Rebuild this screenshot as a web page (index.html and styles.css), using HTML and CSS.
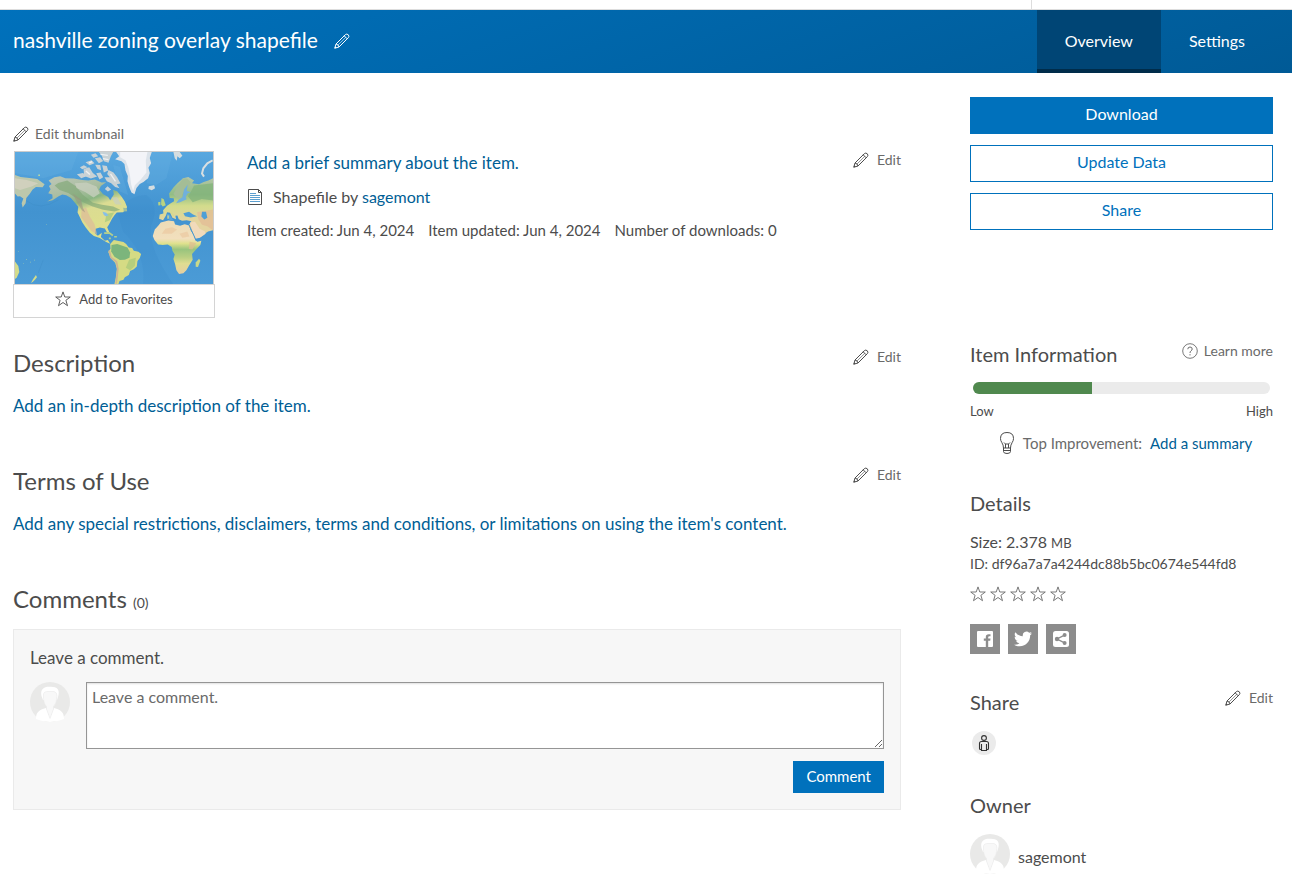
FILE: index.html
```html
<!DOCTYPE html>
<html lang="en">
<head>
    <meta charset="UTF-8">
    <meta name="viewport" content="width=device-width, initial-scale=1.0">
    <title>nashville zoning overlay shapefile</title>
    <link rel="stylesheet" href="styles.css">
</head>
<body>
    <!-- shared icons -->
    <svg class="sprite" aria-hidden="true">
        <symbol id="pencil" viewBox="0 0 16 16">
            <path d="M.8 15.200 2 11 11.300 1.700Q12.800.4 14.300 1.800 15.600 3.300 14.300 4.700L5 14Z M2 11Q4.500 11.500 5 14 M10.200 2.800 13.200 5.800" fill="none" stroke="currentColor" stroke-linejoin="round"/>
            <path d="M4 12 11.800 4.300" fill="none" stroke="currentColor" stroke-width=".6"/>
            <path d="M.4 15.600 1.200 13.300 2.700 14.800Z" fill="currentColor"/>
        </symbol>
        <symbol id="star" viewBox="0 0 16 16">
            <path d="M8 .9 9.800 6H15.300L10.900 9.300 12.500 14.700 8 11.500 3.500 14.700 5.100 9.300.7 6H6.200Z" fill="none" stroke="currentColor" stroke-width=".9"/>
        </symbol>
        <symbol id="avatar" viewBox="0 0 40 40">
            <circle cx="20" cy="20" r="20" fill="#e9e9e8"/>
            <path d="M11.500 14C10 7 14 4.500 20 4.800 27 4.500 30 7.500 28.300 14L27 18H13Z" fill="#fff"/>
            <path d="M6 37C6 30 9 28 16 26L20 36 24 26C31 28 34 30 34 37Q27 40 20 40T6 37Z" fill="#fff"/>
            <path d="M13.500 12Q14 9.500 17 9.500H24Q27 10 27 14 27 21 23.500 24.500V27L20 36.500 16.500 27V24.500Q13 21 13.500 12Z" fill="#f8f8f8" stroke="#ebebeb" stroke-width=".6"/>
        </symbol>
    </svg>

    <div class="topbar"><div class="topbar-user"></div></div>

    <header class="header">
        <div class="title">
            <h1>nashville zoning overlay shapefile</h1>
            <button class="title-edit" aria-label="Edit title"><svg class="icon"><use href="#pencil"/></svg></button>
        </div>
        <nav class="tabs">
            <a href="#overview" class="tab active">Overview</a>
            <a href="#settings" class="tab">Settings</a>
        </nav>
    </header>

    <main class="page">
        <div class="content">
            <button class="edit edit-thumb"><svg class="icon"><use href="#pencil"/></svg>Edit thumbnail</button>
            <section class="item">
                <div class="thumb-card">
                    <svg class="thumb" viewBox="45 111 595 397" preserveAspectRatio="none" role="img" aria-label="World map">
                        <defs>
                            <linearGradient id="sea" x1="0" y1="0" x2="0" y2="1">
                                <stop offset="0" stop-color="#58a7df"/>
                                <stop offset=".45" stop-color="#4293d0"/>
                                <stop offset="1" stop-color="#4b9bd6"/>
                            </linearGradient>
                            <linearGradient id="north" gradientUnits="userSpaceOnUse" x1="220" y1="180" x2="280" y2="370">
                                <stop offset="0" stop-color="#b9c5b2"/>
                                <stop offset=".25" stop-color="#a9bda0"/>
                                <stop offset=".42" stop-color="#8ab583"/>
                                <stop offset=".55" stop-color="#dbdc92"/>
                                <stop offset="1" stop-color="#dfe08b"/>
                            </linearGradient>
                            <linearGradient id="eurasia" gradientUnits="userSpaceOnUse" x1="0" y1="185" x2="0" y2="320">
                                <stop offset="0" stop-color="#b5c6a8"/>
                                <stop offset=".4" stop-color="#92bd85"/>
                                <stop offset=".65" stop-color="#d3dc8c"/>
                                <stop offset="1" stop-color="#e4d4a0"/>
                            </linearGradient>
                            <linearGradient id="africa" gradientUnits="userSpaceOnUse" x1="0" y1="320" x2="0" y2="478">
                                <stop offset="0" stop-color="#eddcb6"/>
                                <stop offset=".33" stop-color="#f2dfbd"/>
                                <stop offset=".42" stop-color="#dfe18d"/>
                                <stop offset=".53" stop-color="#99c47e"/>
                                <stop offset=".68" stop-color="#b9cf83"/>
                                <stop offset=".8" stop-color="#dfdd91"/>
                                <stop offset="1" stop-color="#e6cea3"/>
                            </linearGradient>
                        </defs>
                        <rect x="45" y="111" width="595" height="397" fill="url(#sea)"/>
                        <!-- ocean depth -->
                        <path d="M352 290Q390 240 440 240 480 270 455 330 440 390 520 508H430Q440 420 370 350Z" fill="#3587c6" opacity=".2"/>
                        <path d="M45 111H235L215 165 130 190 45 175Z M455 111H520L500 190 470 210 440 205Z M340 150 360 155 385 240 360 230Z" fill="#6ab2e5" opacity=".25"/>
                        <path d="M130 435 115 475 M80 258Q120 290 175 255" fill="none" stroke="#3a87bf" stroke-width="1.500" opacity=".5"/>
                        <!-- siberia -->
                        <path d="M45 180 62 186 75 188 95 190 112 192 134 208 128 217 108 216 98 224 89 237 79 249 77 265 68 278 65 265 70 251 60 244 53 245 45 236Z" fill="#bcc8ac"/>
                        <path d="M45 190 80 195 115 205 95 215 60 225 45 220Z" fill="#d9d3c4" opacity=".7"/>
                        <!-- north america -->
                        <path d="M146 197 163 187 181 184 196 190 222 191 247 195 265 197 285 194 305 203 319 202 303 213 298 224 309 237 325 246 331 256 342 239 340 225 352 229 366 246 375 260 382 277 370 292 351 293 345 300 337 311 327 330 322 337 329 354 322 354 315 341 300 338 287 342 286 356 294 363 306 354 303 367 315 378 324 376 331 387 319 382 300 370 282 364 270 354 257 337 247 322 240 307 233 293 235 276 222 260 213 249 199 241 187 239 175 245 158 256 142 260 158 250 157 239 145 235 152 223 147 213 155 207Z" fill="url(#north)"/>
                        <path d="M175 204 202 197 228 214 248 239 279 264 307 270 340 275 361 285 344 290 310 285 278 275 250 262 225 247 205 234 179 225 164 212Z" fill="#7fa776" opacity=".65"/>
                        <path d="M225 205 260 203 290 215 300 235 281 248 257 232 230 219Z M335 248 352 247 365 270 346 268Z" fill="#cad0c0" opacity=".75"/>
                        <path d="M245 285 258 278 271 307 284 328 292 360 274 348 258 326 244 308Z" fill="#dfb99a" opacity=".65"/>
                        <path d="M218 236 243 253 249 279 256 293 246 286 232 263Z" fill="#9b967e" opacity=".6"/>
                        <path d="M320 297 343 293 330 316 315 322Z" fill="#a9cb80" opacity=".8"/>
                        <path d="M308 291 319 294 326 302 316 304 311 298Z" fill="#87bfe6"/>
                        <path d="M370 279 381 280 382 289 372 290Z" fill="#9bbda0"/>
                        <!-- arctic islands -->
                        <path d="M231 178 249 174 262 183 244 190Z M251 162 268 157 279 174 292 185 273 191 253 183Z M240 157 252 151 263 157 247 163Z M257 142 275 136 284 145 269 151Z M285 130 301 127 310 138 297 145Z M273 119 287 115 295 124 281 128Z M297 111 340 111 333 124 326 143 312 139 306 122Z M286 149 301 150 304 166 293 162Z M307 151 321 153 325 167 312 173Z M326 165 341 173 352 187 362 206 351 208 359 220 346 216 334 205 321 199 314 187 330 187 322 177Z M289 175 302 173 310 187 299 194Z M323 214 334 224 324 230 315 222Z" fill="#c9d2d5"/>
                        <path d="M268 144 277 140 M302 118 324 121 M309 131 326 134 M258 168 270 179 M332 177 347 199" fill="none" stroke="#eef0f2" stroke-width="4"/>
                        <!-- greenland, iceland, svalbard -->
                        <path d="M349 111 456 111 450 129 454 145 446 158 450 174 445 190 431 201 420 207 410 219 404 238 395 233 388 216 383 199 384 183 377 167 374 147 365 139 346 133 358 124Z" fill="#dce3ea"/>
                        <path d="M361 111 443 111 438 137 440 173 423 194 405 211 400 228 394 209 391 185 386 159 377 136 361 127Z" fill="#f3f4f8"/>
                        <path d="M447 214 463 211 466 220 456 226 446 222Z M521 111 540 111 548 122 540 130 533 124 531 137 525 130Z" fill="#d5dde0"/>
                        <path d="M639 136 623 145 611 160 607 176 613 185" fill="none" stroke="#d9dfe1" stroke-width="6"/>
                        <!-- caribbean -->
                        <path d="M313 355 328 354 339 362 M343 366 351 366 M327 371 333 371" fill="none" stroke="#b4cf8c" stroke-width="5"/>
                        <!-- south america -->
                        <path d="M331 388 342 376 353 378 371 382 379 388 387 398 397 400 402 408 416 411 424 418 420 430 413 439 411 455 402 464 391 469 387 481 375 488 371 495 359 499 356 508H344L348 488 351 462 346 444 334 432 325 412 332 402Z" fill="#d5db84"/>
                        <path d="M335 391 352 388 383 398 391 413 389 429 375 435 360 436 344 426 334 410Z" fill="#7cb57c"/>
                        <path d="M328 407 333 428 350 441 354 463 349 507" fill="none" stroke="#cdb495" stroke-width="5"/>
                        <path d="M388 435 408 429 405 454 391 467 378 459Z" fill="#a9c97b" opacity=".75"/>
                        <!-- europe and asia -->
                        <path d="M640 190V346L625 350 612 359 597 369 586 366 574 344 567 332 575 319 561 316 547 318 537 313 533 302 527 303 529 313 518 309 511 294 502 292 499 301 490 316 478 312 480 299 491 296 490 286 502 273 513 265 523 259 522 250 510 249 508 236 521 218 533 205 550 190 566 186 583 197 577 205 598 208 612 201 626 197Z" fill="url(#eurasia)"/>
                        <path d="M550 190 563 191 573 203 566 217 551 232 544 251 531 249 521 237 531 219Z" fill="#a4bd96"/>
                        <path d="M564 209 553 224 548 247 537 254 529 265 541 262 561 253 558 246 564 235 574 232 561 228Z" fill="#70b0dc"/>
                        <path d="M583 212 640 205V257L606 252 579 262 565 244 574 230Z" fill="#81b37b" opacity=".75"/>
                        <path d="M592 292 607 289 624 287 640 284V346L623 334 607 330 596 313Z" fill="#e2bb94" opacity=".7"/>
                        <path d="M485 249 492 253 498 271 489 275 484 269Z M475 262 482 261 482 271 476 272Z" fill="#b9d381"/>
                        <path d="M551 295 568 291 580 299 592 304 573 308 556 304Z M607 291 619 291 623 309 614 314 605 305Z" fill="#4e9fd6"/>
                        <path d="M499 297 509 299 522 318 509 315 505 307Z" fill="#5aa6db"/>
                        <path d="M513 292 522 303 M505 302V312" fill="none" stroke="#d7d98e" stroke-width="4"/>
                        <!-- africa and arabia -->
                        <path d="M483 323 506 317 523 319 526 329 541 333 555 328 568 332 573 347 582 360 587 377 594 381 605 378 602 391 589 404 577 418 579 435 569 451 560 467 551 476 538 478 530 467 526 448 521 433 525 419 518 408 516 397 504 389 489 391 475 389 464 376 459 364 465 344 476 332Z" fill="url(#africa)"/>
                        <path d="M571 323 586 321 600 342 615 349 618 357 601 369 587 372 578 349Z" fill="#f1dabb"/>
                        <path d="M568 330 576 348 587 372 592 379 600 372 619 361" fill="none" stroke="#4597d0" stroke-width="3"/>
                        <path d="M497 342 517 337 532 344 516 357 486 357Z M539 357 563 350 569 365 548 369Z" fill="#ebc9a1" opacity=".7"/>
                        <path d="M570 381 590 385 578 404 567 403Z" fill="#dfba91" opacity=".7"/>
                        <path d="M598 432 602 438 595 457 588 456 588 443Z" fill="#c9d889"/>
                        <!-- pacific islands -->
                        <path d="M45 440 55 454 58 472 50 489 45 493Z M108 481 111 488 105 495 98 502 93 505 99 494Z" fill="#d4dc8c"/>
                        <path d="M55 410h2v2h-2zM79 433h2v2h-2zM91 441h2v2h-2zM103 435h2v2h-2zM69 446h2v2h-2zM115 179h5v4h-5zM139 328h2v2h-2z" fill="#bcd9a0"/>
                    </svg>
                    <button class="favorite"><svg class="icon"><use href="#star"/></svg>Add to Favorites</button>
                </div>
                <div class="item-text">
                    <a href="#summary" class="prompt">Add a brief summary about the item.</a>
                    <p class="item-type">
                        <svg class="icon" viewBox="0 0 16 16" fill="none">
                            <path d="M1.500.5H11.500L14.500 3.500V15.500H1.500Z M11.500.5V3.500H14.500" stroke="#4c4c4c"/>
                            <path d="M3 4.500H9 M3 6.500H13 M3 8.500H13 M3 10.500H13 M3 12.500H13" stroke="#5b9fd0"/>
                        </svg>
                        <span>Shapefile by <a href="#sagemont">sagemont</a></span>
                    </p>
                    <p class="item-dates">
                        <span>Item created: Jun 4, 2024</span>
                        <span>Item updated: Jun 4, 2024</span>
                        <span>Number of downloads: 0</span>
                    </p>
                </div>
                <button class="edit"><svg class="icon"><use href="#pencil"/></svg>Edit</button>
            </section>

            <section class="block">
                <div class="block-head">
                    <h2>Description</h2>
                    <button class="edit"><svg class="icon"><use href="#pencil"/></svg>Edit</button>
                </div>
                <a href="#description" class="prompt">Add an in-depth description of the item.</a>
            </section>

            <section class="block">
                <div class="block-head">
                    <h2>Terms of Use</h2>
                    <button class="edit"><svg class="icon"><use href="#pencil"/></svg>Edit</button>
                </div>
                <a href="#terms" class="prompt">Add any special restrictions, disclaimers, terms and conditions, or limitations on using the item's content.</a>
            </section>

            <section class="comments">
                <h2>Comments <small>(0)</small></h2>
                <form class="comment-form">
                    <label for="comment">Leave a comment.</label>
                    <div class="comment-row">
                        <svg class="avatar"><use href="#avatar"/></svg>
                        <textarea id="comment" placeholder="Leave a comment."></textarea>
                    </div>
                    <button type="button" class="btn-comment">Comment</button>
                </form>
            </section>
        </div>

        <aside class="sidebar">
            <div class="actions">
                <button class="btn btn-primary">Download</button>
                <button class="btn">Update Data</button>
                <button class="btn">Share</button>
            </div>

            <section class="info">
                <div class="side-head">
                    <h3>Item Information</h3>
                    <a href="#learn" class="learn">
                        <svg class="icon" viewBox="0 0 16 16" fill="none" stroke="currentColor">
                            <circle cx="8" cy="8" r="7.300" stroke-width=".9"/>
                            <path d="M5.800 6.200Q5.800 4 8 4T10.200 6Q10.200 7.100 9 7.900 8 8.500 8 10 M8 11.200V12.400"/>
                        </svg>Learn more
                    </a>
                </div>
                <div class="meter"><div class="meter-fill"></div></div>
                <div class="meter-labels"><span>Low</span><span>High</span></div>
                <p class="improve">
                    <svg class="bulb" viewBox="0 0 16 24" fill="none" stroke="#4c4c4c">
                        <path d="M4.500 17Q4.500 14 2.800 11.500 1.500 9.500 1.500 7.500 1.500 1.500 8 1.500T14.500 7.500Q14.500 9.500 13.200 11.500 11.500 14 11.500 17Z M4.500 19.500H11.500 M4.500 17V20.500Q4.500 22.500 8 22.500T11.500 20.500V17 M6.500 17V13L5 11.500 M9.500 17V13L11 11.500 M6.500 13H9.500"/>
                    </svg>
                    <span>Top Improvement:</span>
                    <a href="#summary">Add a summary</a>
                </p>
            </section>

            <section class="details">
                <h3>Details</h3>
                <p>Size: 2.378 <small>MB</small></p>
                <p class="item-id">ID: df96a7a7a4244dc88b5bc0674e544fd8</p>
                <div class="stars">
                    <svg class="icon"><use href="#star"/></svg>
                    <svg class="icon"><use href="#star"/></svg>
                    <svg class="icon"><use href="#star"/></svg>
                    <svg class="icon"><use href="#star"/></svg>
                    <svg class="icon"><use href="#star"/></svg>
                </div>
                <div class="social">
                    <a href="#facebook" aria-label="Facebook">
                        <svg viewBox="0 0 16 16"><path d="M1 0H15Q16 0 16 1V15Q16 16 15 16H11.200V9.800H13.200L13.500 7.500H11.200V6.200Q11.200 5.200 12.300 5.200H13.500V3.200H11.700Q8.800 3.200 8.800 6V7.500H6.800V9.800H8.800V16H1Q0 16 0 15V1Q0 0 1 0Z" fill="#fff"/></svg>
                    </a>
                    <a href="#twitter" aria-label="Twitter">
                        <svg class="bird" viewBox="0 2 24 20"><path d="M23.950 4.570a10 10 0 0 1-2.820.770 4.960 4.960 0 0 0 2.160-2.720c-.95.550-2 .960-3.130 1.180a4.920 4.920 0 0 0-8.380 4.480C7.690 8.100 4.070 6.130 1.640 3.160a4.820 4.820 0 0 0-.67 2.480c0 1.700.87 3.210 2.190 4.100a4.900 4.900 0 0 1-2.230-.620v.060a4.920 4.920 0 0 0 3.950 4.830 5 5 0 0 1-2.210.080 4.940 4.940 0 0 0 4.600 3.420A9.870 9.870 0 0 1 0 19.540a13.990 13.990 0 0 0 7.550 2.210c9.050 0 14-7.500 14-13.980 0-.210 0-.420-.020-.630a9.940 9.940 0 0 0 2.420-2.570Z" fill="#fff"/></svg>
                    </a>
                    <a href="#share" aria-label="Share link">
                        <svg viewBox="0 0 16 16"><rect width="16" height="16" rx="2.500" fill="#fff"/><path d="M12 3.800 4 8 12 12.200" fill="none" stroke="#8c8c8c" stroke-width="1.400"/><g fill="#8c8c8c"><circle cx="11.600" cy="4" r="2"/><circle cx="4" cy="8" r="2.200"/><circle cx="11.600" cy="12" r="2"/></g></svg>
                    </a>
                </div>
            </section>

            <section class="share">
                <div class="side-head">
                    <h3>Share</h3>
                    <button class="edit"><svg class="icon"><use href="#pencil"/></svg>Edit</button>
                </div>
                <svg class="share-level" viewBox="0 0 24 24" role="img" aria-label="Owner only">
                    <circle cx="12" cy="12" r="12" fill="#ebebeb"/>
                    <g fill="none" stroke="#323232" stroke-width="1.100"><circle cx="12" cy="7" r="2.400"/><path d="M9.500 18.500H8.500Q7.500 18.500 7.500 17.500V12.500Q7.500 10.500 9.500 10.500H14.500Q16.500 10.500 16.500 12.500V17.500Q16.500 18.500 15.500 18.500H14.500 M9.500 13V19.500H14.500V13"/></g>
                </svg>
            </section>

            <section class="owner">
                <h3>Owner</h3>
                <div class="owner-row">
                    <svg class="avatar"><use href="#avatar"/></svg>
                    <span>sagemont</span>
                </div>
            </section>
        </aside>
    </main>
</body>
</html>
```
FILE: styles.css
```css
* { box-sizing: border-box; }
body { margin: 0; background: #fff; color: #4c4c4c; font: 16px/24px Lato, "Open Sans", sans-serif; }
h1, h2, h3, p { margin: 0; font-weight: 400; }
a { color: #005e95; text-decoration: none; }
button { font-family: inherit; cursor: pointer; }
svg { display: block; flex: none; }
.sprite { position: absolute; width: 0; height: 0; }
.icon { width: 16px; height: 16px; }
.avatar { width: 40px; height: 40px; }

.topbar { display: flex; justify-content: flex-end; height: 10px; border-bottom: 1px solid #ddd; }
.topbar-user { width: 261px; border-left: 1px solid #ddd; }

.header { display: flex; justify-content: space-between; height: 63px; padding: 0 19px 0 13px; background: linear-gradient(160deg, #0071bc, #005a96); color: #fff; }
.title { display: flex; align-items: center; gap: 16px; padding-bottom: 3px; }
.header h1 { font-size: 21px; line-height: 28px; }
.title-edit { padding: 2px 0 0; border: 0; background: none; color: #fff; }
.tabs { display: flex; }
.tab { display: flex; align-items: center; padding: 0 28px 2px; color: #fff; font-size: 16px; }
.tab.active { background: #004575; box-shadow: inset 0 -4px #002c4a; }

.page { display: grid; grid-template-columns: 1fr 303px; gap: 69px; padding: 24px 19px 0 13px; }

.edit { display: flex; align-items: center; gap: 8px; height: 18px; padding: 0; border: 0; background: none; color: #6a6a6a; font-size: 14px; line-height: 18px; }
.edit .icon { color: #4c4c4c; }
.edit-thumb { margin: 28px 0 8px; gap: 6px; }

.item { display: flex; align-items: flex-start; gap: 32px; }
.item .edit { margin-left: auto; }
.thumb-card { width: 202px; flex: none; }
.thumb { width: 200px; height: 133px; margin: 0 auto; border: 1px solid #ccc; border-bottom: 0; }
.favorite { display: flex; align-items: center; justify-content: center; gap: 8px; width: 100%; height: 34px; padding: 0 0 4px; border: 1px solid #d4d4d4; background: #fff; color: #4c4c4c; font-size: 13px; }
.prompt { display: block; font-size: 17px; }
.item-type { display: flex; align-items: center; gap: 10px; margin: 10px 0; }
.item-dates { display: flex; gap: 14px; font-size: 15px; line-height: 22px; }

.block { margin: 30px 0 48px; }
.block + .block { margin-top: 0; }
.block-head { display: flex; justify-content: space-between; margin-bottom: 16px; }
h2 { font-size: 24px; line-height: 30px; }
h2 small { font-size: 14px; line-height: 20px; }
.comment-form { margin-top: 15px; padding: 16px; border: 1px solid #eaeaea; background: #f7f7f7; }
.comment-form label { display: block; font-size: 17px; }
.comment-row { display: flex; gap: 16px; margin: 12px 0; }
textarea { flex: 1; height: 67px; padding: 4px 5px; border: 1px solid #959595; border-radius: 0; background: #fff; font: 16px/20px Lato, sans-serif; box-shadow: inset 0 1px 2px #e0e0e0; resize: vertical; }
textarea::placeholder { color: #6a6a6a; }
.btn-comment { display: block; height: 32px; margin-left: auto; padding: 0 13px 2px; border: 0; background: #0071bc; color: #fff; font-size: 15px; }

.actions { display: grid; gap: 11px; margin-bottom: 111px; }
.btn { height: 37px; padding: 0 0 4px; border: 1px solid #0071bc; background: #fff; color: #0071bc; font-size: 16px; }
.btn-primary { background: #0071bc; color: #fff; }
h3 { font-size: 20px; line-height: 26px; }
.side-head { display: flex; justify-content: space-between; }
.learn { display: flex; gap: 6px; align-items: center; height: 20px; color: #6a6a6a; font-size: 14px; }
.meter { height: 12px; margin: 15px 3px 7px; border-radius: 6px; background: #ebebeb; overflow: hidden; }
.meter-fill { width: 40%; height: 100%; background: #50894e; }
.meter-labels { display: flex; justify-content: space-between; font-size: 13px; line-height: 20px; }
.improve { display: flex; align-items: center; justify-content: center; gap: 8px; margin: 10px 0 35px; padding-left: 8px; color: #6a6a6a; font-size: 15px; }
.bulb { width: 16px; height: 24px; }
.details h3 { margin-bottom: 15px; }
.details p { line-height: 22px; }
.details small { font-size: 13px; line-height: 20px; }
.details .item-id { font-size: 14px; }
.stars { display: flex; gap: 4px; margin: 11px 0 22px; color: #6a6a6a; }
.social { display: flex; gap: 8px; margin-bottom: 35px; }
.social a { display: grid; place-items: center; width: 30px; height: 30px; background: #8c8c8c; }
.social svg { width: 16px; height: 16px; }
.social .bird { width: 18px; }
.share-level { width: 24px; height: 24px; margin: 16px 2px 37px; }
.owner h3 { margin-bottom: 16px; }
.owner-row { display: flex; align-items: flex-end; gap: 8px; line-height: 34px; }
```
